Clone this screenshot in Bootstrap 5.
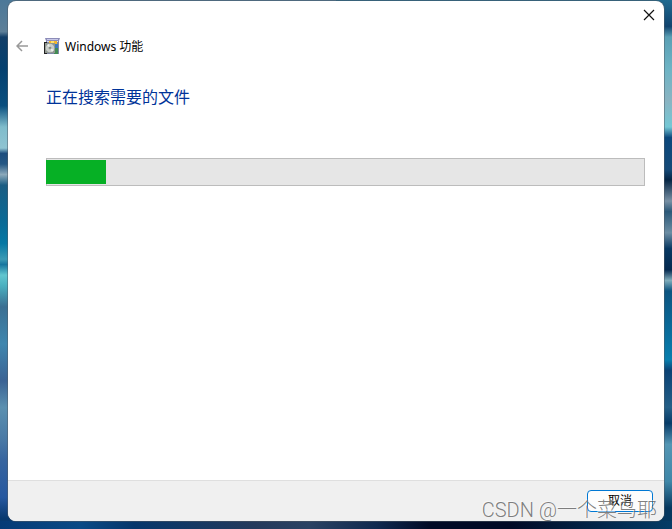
<!DOCTYPE html>
<html lang="zh-CN">
<head>
<meta charset="utf-8">
<meta name="viewport" content="width=device-width, initial-scale=1">
<title>Windows 功能</title>
<link href="https://cdn.jsdelivr.net/npm/bootstrap@5.3.0/dist/css/bootstrap.min.css" rel="stylesheet">
<style>
  body {
    font-family: "Noto Sans", "Noto Sans CJK SC", sans-serif;
    font-size: 12px;
    line-height: 20px;
    color: #000;
  }
  .desktop {
    padding: 1px 8px 8px;
    background:
      linear-gradient(90deg, #053a76, #0a4a86 12%, #05366b 20%, #243a5c 38%, #2a4263 46%, #10294f 56%, #010a26 64%, #010a26 76%, #03284c 90%, #053c66) bottom / 100% 8px no-repeat,
      linear-gradient(#4c7898, #5d7f98 6%, #123e68 7%, #04406f 13%, #0a4f7f 20%, #7fbccb 24%, #8fc4d2 28%, #1d4d7e 29%, #245784 31%, #8ba9bb 33%, #1b5d83 35%, #0a6a96 42%, #0578a4 46%, #3b9ab4 49%, #16769f 50%, #62c6cf 52%, #4bb0c0 54%, #3b6f92 58%, #3f86ae 65%, #3b6394 72%, #5b90b0 77%, #4a7aa6 83%, #38659f 87%, #2658a0 94%, #08396f 98%) left / 50% 100% no-repeat,
      linear-gradient(#1f6a90, #10436e 5%, #5a9fb4 7%, #6eb4c5 13%, #8ab4c2 19%, #74c8d5 24%, #0b487c 26%, #154a78 32%, #052544 34%, #7890a4 38%, #2b5878 40%, #6c8da3 44%, #083862 47%, #04294f 51%, #80adbb 53%, #0c5480 55%, #0a6796 61%, #087fae 68%, #0a4274 70%, #245f87 77%, #063b68 80%, #5496b4 84%, #3f87a8 91%, #06385f 96%) right / 50% 100% no-repeat;
  }
  .dialog-window {
    background: #fff;
    border-radius: 8px;
    box-shadow: 0 0 0 1px rgba(80, 90, 100, .5);
  }
  .close-button, .back-button { line-height: 0; color: #111; }
  .title-bar { height: 28px; padding-right: 9px; }
  .window-heading { gap: 16px; padding: 7px 8px 0; }
  .window-title { gap: 5px; font-size: 12px; line-height: 20px; }
  .title-text { padding-top: 2px; line-height: 18px; }
  .back-button { color: #999; }
  .content-area { padding: 28px 19px 24px 38px; }
  .instruction { font-size: 16px; line-height: 26px; color: #003399; margin-bottom: 48px; }
  .search-progress {
    --bs-progress-height: 28px;
    --bs-progress-bg: #e6e6e6;
    --bs-progress-bar-bg: #06b025;
    --bs-progress-border-radius: 0;
    border: 1px solid #bcbcbc;
    padding: 1px 0;
  }
  .search-progress .progress-bar { margin-left: -1px; }
  .search-progress.progress { overflow: visible; }
  .dialog-actions { background: #f0f0f0; border-top: 1px solid #dfdfdf; border-radius: 0 0 8px 8px; padding: 9px 11px; }
  .cancel-button {
    min-width: 66px;
    padding: 0 8px;
    font-size: 12px;
    line-height: 20px;
    color: #000;
    background: #fdfdfd;
    border: 1px solid #0078d4;
    border-radius: 4px;
  }
  .watermark {
    right: 15px;
    bottom: 4px;
    font-family: Roboto, "Noto Sans CJK SC", sans-serif;
    font-size: 20px;
    font-weight: 300;
    line-height: 30px;
    color: rgba(95, 95, 95, .8);
    text-shadow: -1px -1px 0 rgba(255, 255, 255, .5);
    pointer-events: none;
  }
</style>
</head>
<body>
<div class="desktop position-relative d-flex flex-column min-vh-100">
  <main class="dialog-window d-flex flex-column flex-grow-1">
    <div class="title-bar d-flex justify-content-end align-items-center">
      <button type="button" class="close-button border-0 bg-transparent p-0" aria-label="关闭">
        <svg width="12" height="12" viewBox="0 0 12 12" fill="none" stroke="currentColor" stroke-width="1.2"><path d="M1 1l10 10M11 1L1 11"/></svg>
      </button>
    </div>
    <header class="window-heading d-flex align-items-center">
      <button type="button" class="back-button border-0 bg-transparent p-0" aria-label="返回" disabled>
        <svg width="12" height="12" viewBox="0 0 12 12" fill="none" stroke="currentColor" stroke-width="1.5"><path d="M12 6H1M6 1L1 6l5 5"/></svg>
      </button>
      <h1 class="window-title d-flex align-items-center fw-normal mb-0">
        <svg width="16" height="16" viewBox="0 0 16 16" aria-hidden="true">
          <path fill="#8c8cb8" d="M1 0h15l-1 3H2z"/><path fill="#c8c8e8" d="M3 1h11v1H3z"/>
          <path fill="#7f86a8" d="M2 3h13v13H2z"/><path fill="#d8def0" d="M3 3h11v1H3z"/>
          <path fill="#f5b72c" d="M5 3h8v7H5z"/><path fill="#ffe16b" d="M7 3h3v2H7z"/>
          <path fill="#3b78bd" d="M11 6h3v4h-3z"/><path fill="#438b54" d="M10 10h4v6h-4z"/>
          <path fill="#222" d="M0 4h1v12H0zM0 15h3v1H0zM0 4h3v1H0z"/>
          <path fill="#8f9690" d="M1 5h10v10H1z"/>
          <circle cx="6" cy="10" r="4.3" fill="#c9cec9"/><path fill="#eef1ed" d="M6 10L3 7l2-1zM6 10l4 2-2 2z"/>
          <circle cx="6" cy="10" r="1.3" fill="#667069"/><circle cx="6" cy="10" r=".6" fill="#fff"/>
        </svg>
        <span class="title-text">Windows 功能</span>
      </h1>
    </header>
    <section class="content-area flex-grow-1">
      <h2 class="instruction fw-normal" id="progress-label">正在搜索需要的文件</h2>
      <div class="progress search-progress" role="progressbar" aria-labelledby="progress-label" aria-valuenow="10" aria-valuemin="0" aria-valuemax="100">
        <div class="progress-bar" style="width: 10%"></div>
      </div>
    </section>
    <footer class="dialog-actions d-flex justify-content-end">
      <button type="button" class="cancel-button">取消</button>
    </footer>
  </main>
  <div class="watermark position-absolute text-nowrap">CSDN @一个菜鸟耶</div>
</div>
<script src="https://cdn.jsdelivr.net/npm/bootstrap@5.3.0/dist/js/bootstrap.bundle.min.js"></script>
</body>
</html>
